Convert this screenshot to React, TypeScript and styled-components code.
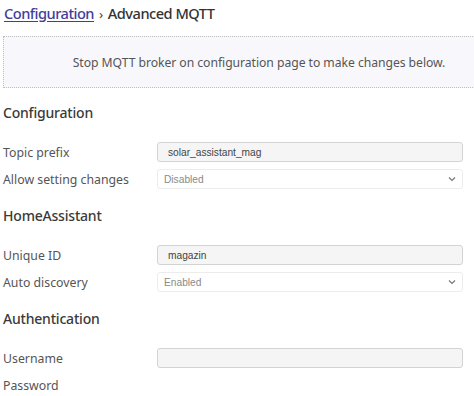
import React from "react";
import styled, { createGlobalStyle } from "styled-components";

const GlobalStyle = createGlobalStyle`
  html, body {
    margin: 0;
    padding: 0;
    background: #ffffff;
    overflow: hidden;
  }
  body {
    font-family: "Noto Sans", "Open Sans", sans-serif;
  }
`;

type Field = {
  label: string;
  kind: "text" | "select" | "none";
  value?: string;
};

type Section = {
  title: string;
  fields: Field[];
};

const sections: Section[] = [
  {
    title: "Configuration",
    fields: [
      { label: "Topic prefix", kind: "text", value: "solar_assistant_mag" },
      { label: "Allow setting changes", kind: "select", value: "Disabled" },
    ],
  },
  {
    title: "HomeAssistant",
    fields: [
      { label: "Unique ID", kind: "text", value: "magazin" },
      { label: "Auto discovery", kind: "select", value: "Enabled" },
    ],
  },
  {
    title: "Authentication",
    fields: [
      { label: "Username", kind: "text", value: "" },
      { label: "Password", kind: "none" },
    ],
  },
];

const Chevron = () => (
  <svg width="8" height="6" viewBox="0 0 8 6" fill="none">
    <path d="M1 1.5L4 4.5L7 1.5" stroke="#777" strokeWidth="1.2" />
  </svg>
);

const App: React.FC = () => {
  return (
    <Page>
      <GlobalStyle />
      <Breadcrumb>
        <CrumbLink href="#">Configuration</CrumbLink>
        <Sep>›</Sep>
        <span>Advanced MQTT</span>
      </Breadcrumb>
      <Notice>Stop MQTT broker on configuration page to make changes below.</Notice>
      {sections.map((s) => (
        <SectionBlock key={s.title}>
          <SectionTitle>{s.title}</SectionTitle>
          <Rows>
            {s.fields.map((f) => (
              <Row key={f.label}>
                <Label>{f.label}</Label>
                {f.kind === "text" && <TextInput>{f.value}</TextInput>}
                {f.kind === "select" && (
                  <SelectBox>
                    <span>{f.value}</span>
                    <Chevron />
                  </SelectBox>
                )}
              </Row>
            ))}
          </Rows>
        </SectionBlock>
      ))}
    </Page>
  );
};

const Page = styled.div`
  width: 520px;
  padding: 0 0 0 3px;
`;

const Breadcrumb = styled.div`
  display: flex;
  align-items: baseline;
  gap: 5px;
  font-size: 14.6px;
  font-weight: 500;
  letter-spacing: -0.5px;
  color: #333;
  height: 26px;
  line-height: 26px;
  padding-left: 1px;
`;

const CrumbLink = styled.a`
  color: #3e3e9c;
  text-decoration: underline;
  text-underline-offset: 2px;
`;

const Sep = styled.span`
  font-size: 13px;
  color: #555;
`;

const Notice = styled.div`
  margin-top: 10px;
  width: 512px;
  height: 52px;
  box-sizing: border-box;
  border: 1px dotted #bdbdbd;
  background: #f8f8fc;
  display: flex;
  align-items: center;
  justify-content: center;
  font-size: 12.2px;
  letter-spacing: -0.05px;
  color: #555;
  padding-top: 1px;
`;

const SectionBlock = styled.div`
  display: flex;
  flex-direction: column;
  margin-top: 13px;

  & + & {
    margin-top: 15px;
  }
`;

const SectionTitle = styled.div`
  font-size: 14px;
  font-weight: 500;
  letter-spacing: -0.2px;
  color: #3a3a3a;
  height: 24px;
  line-height: 24px;
`;

const Rows = styled.div`
  display: flex;
  flex-direction: column;
  gap: 7px;
  margin-top: 17px;
`;

const Row = styled.div`
  display: flex;
  align-items: center;
  height: 20px;
`;

const Label = styled.div`
  width: 154px;
  font-size: 12.3px;
  color: #555;
`;

const fieldBase = `
  width: 306px;
  height: 20px;
  box-sizing: border-box;
  border-radius: 3px;
  font-family: "Liberation Sans", Arial, sans-serif;
  font-size: 10.2px;
  display: flex;
  align-items: center;
`;

const TextInput = styled.div`
  ${fieldBase}
  background: #f5f5f5;
  border: 1px solid #d3d3d3;
  color: #444;
  padding-left: 10px;
`;

const SelectBox = styled.div`
  ${fieldBase}
  background: #ffffff;
  border: 1px solid #ececec;
  color: #8a8a8a;
  padding: 0 6px 0 6px;
  justify-content: space-between;
`;

export default App;
